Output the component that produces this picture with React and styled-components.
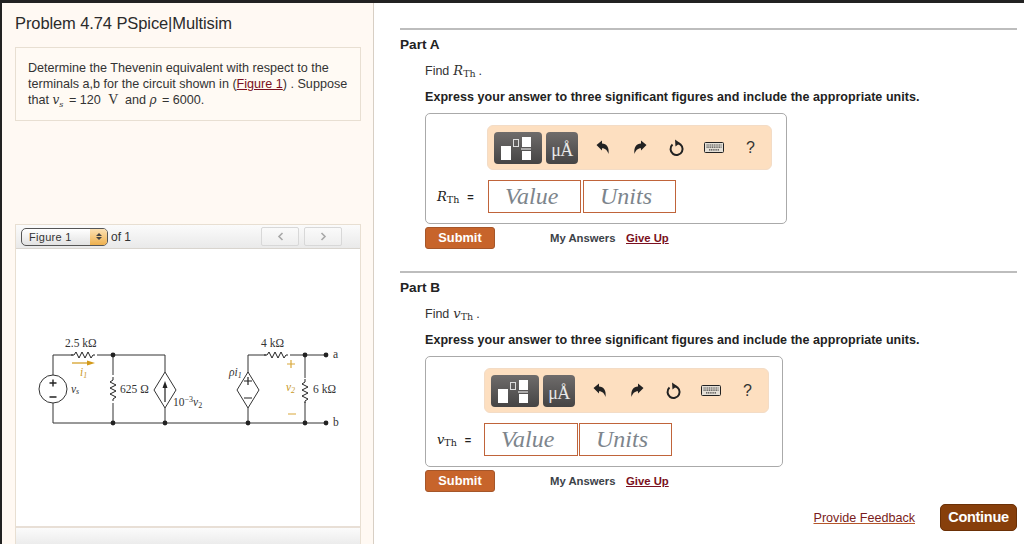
import React from 'react';
import styled, { createGlobalStyle } from 'styled-components';

const Global = createGlobalStyle`
  html, body { margin: 0; padding: 0; background: #fff; }
  body { font-family: "Liberation Sans", Arial, sans-serif; color: #222; overflow: hidden; }
`;
const Page = styled.div`
  width: 1024px; height: 544px; overflow: hidden; display: flex; flex-direction: column;
`;
const TopBar = styled.div`
  height: 3px; flex: none; background: #222;
`;
const Columns = styled.div`
  flex: 1; display: flex; min-height: 0;
`;
const Left = styled.div`
  width: 346px; flex: none; background: #fff9f3; border-left: 2px solid #222;
  border-right: 1px solid #d8cfc4; padding: 0 12px 0 13px; display: flex; flex-direction: column;
`;
const Title = styled.h1`
  margin: 10px 0 0; font-size: 16.5px; line-height: 20px; font-weight: 400; color: #2b2b2b; letter-spacing: -0.1px;
`;
const Statement = styled.div`
  margin-top: 14px; height: 74px; box-sizing: border-box; border: 1px solid #e8dfd2; background: #fffaf4;
  padding: 13px 12px 0; font-size: 12.6px; line-height: 15.5px; color: #333;
`;
const MathI = styled.i`
  font-family: "DejaVu Serif", serif; font-size: 12px; margin-right: 2px;
`;
const TinySub = styled.sub`
  font-size: 8px; line-height: 0;
`;
const MathR = styled.span`
  font-family: "Liberation Serif", serif; font-size: 14px; margin: 0 3px 0 4px;
`;
const RedLink = styled.a`
  color: #7a1020; text-decoration: underline;
`;
const FigurePanel = styled.div`
  margin-top: 103px; border: 1px solid #e8dfd2; border-bottom: 0; background: #fff; flex: 1;
  display: flex; flex-direction: column; min-height: 0;
`;
const FigureBar = styled.div`
  height: 23px; flex: none; display: flex; align-items: center; padding: 0 18px 0 5px;
  background: linear-gradient(#fbfbfb, #e9e9e9); border-bottom: 1px solid #d8d4ce;
  font-size: 12px; color: #333;
`;
const FigSelect = styled.div`
  width: 87px; height: 18px; box-sizing: border-box; border: 1px solid #555; border-radius: 5px;
  background: linear-gradient(#fff, #e2e2e2); display: flex; align-items: center; justify-content: space-between;
  padding-left: 7px; font-size: 11px; letter-spacing: 0.3px; overflow: hidden; margin-right: 3px;
`;
const Stepper = styled.span`
  width: 17px; height: 100%; background: linear-gradient(#fbe1b4, #eeb04d); color: #333;
  display: flex; flex-direction: column; align-items: center; justify-content: center; gap: 1px;
`;
const Tri = styled.span`
  width: 0; height: 0; border-left: 3px solid transparent; border-right: 3px solid transparent;
  ${p => p.$up ? 'border-bottom: 3px solid #444;' : 'border-top: 3px solid #444;'}
`;
const Spacer = styled.div`flex: 1;`;
const PagerBtn = styled.div`
  width: 38px; height: 19px; box-sizing: border-box; margin-left: 5px; border: 1px solid #d8d8d8; border-radius: 2px;
  background: linear-gradient(#fafafa, #eee); display: flex; align-items: center; justify-content: center;
`;
const FigureBody = styled.div`
  flex: 1; display: flex; flex-direction: column; min-height: 0;
`;
const CircuitWrap = styled.div`
  height: 279px; flex: none; border-bottom: 2px solid #e8dfd6; box-sizing: border-box;
`;
const FigureFoot = styled.div`
  flex: 1; background: linear-gradient(#fbfbfb, #ececec);
`;
const Right = styled.div`
  flex: 1; padding: 0 7px 0 26px; min-width: 0; display: flex; flex-direction: column;
`;
const Rule = styled.div`
  height: 2px; background: #bdbdbd; margin-top: ${p => p.$top}px;
`;
const PartTitle = styled.div`
  font-size: 13.6px; font-weight: 700; line-height: 14px; margin-top: 8px; color: #222;
`;
const PartBody = styled.div`
  padding-left: 25px; display: flex; flex-direction: column;
`;
const Find = styled.div`
  margin-top: 11px; font-size: 12.5px; line-height: 16px; color: #333; height: 16px; display: flex; align-items: baseline;
`;
const Express = styled.div`
  margin-top: 11px; font-size: 12.5px; line-height: 14px; font-weight: 700; color: #222; letter-spacing: 0.05px; white-space: nowrap;
`;
const AnswerBox = styled.div`
  margin-top: 9px; width: ${p => p.$w}px; height: 111px; box-sizing: border-box; border: 1px solid #aaa; border-radius: 5px;
  background: #fff; padding-top: 11px; display: flex; flex-direction: column;
`;
const Toolbar = styled.div`
  margin-left: ${p => p.$left}px; width: 285px; height: 45px; box-sizing: border-box; border-radius: 6px; background: #fddfc0;
  display: flex; align-items: center; padding-left: 6px; border: 1px solid #f3dcc6;
`;
const ToolKey = styled.div`
  width: ${p => p.$w}px; height: 32px; border-radius: 4px; background: linear-gradient(#6f6c6b, #454444);
  margin-right: 4px; display: flex; align-items: flex-end; justify-content: center; color: #e8e8e8;
  font-family: "Liberation Serif", serif; font-size: 18px; line-height: 28px; flex: none; letter-spacing: -0.5px;
`;
const ToolIcon = styled.div`
  width: 37px; display: flex; justify-content: center; align-items: center; flex: none; color: #333;
  font-size: 16px; margin-left: ${p => p.$ml || 0}px;
`;
const InputRow = styled.div`
  margin-top: 10px; display: flex; align-items: center;
`;
const Label = styled.div`
  width: ${p => p.$w}px; padding-left: 11px; box-sizing: border-box; flex: none; font-size: 12px; color: #222; white-space: nowrap;
  display: flex; align-items: baseline;
`;
const Sub = styled.span`
  font-size: 9.5px; font-style: normal; font-family: "DejaVu Serif", serif; transform: translateY(2px); display: inline-block;
`;
const MathVar = styled.i`
  font-family: "DejaVu Serif", serif; font-size: 13px;
`;
const FindVar = styled.span`
  margin-left: 4px; display: inline-flex; align-items: baseline; margin-right: 3px;
`;
const Eq = styled.span`
  font-family: "Liberation Sans", sans-serif; font-style: normal; margin-left: 8px; font-size: 11px; font-weight: 700;
`;
const Field = styled.div`
  width: ${p => p.$w}px; height: 33px; box-sizing: border-box; border: 1px solid #c0643a; background: #fff;
  font-family: "Liberation Serif", serif; font-style: italic; font-size: 24px; color: #7d858c;
  padding-left: 16px; line-height: 31px; margin-right: ${p => p.$mr || 0}px;
`;
const Actions = styled.div`
  margin-top: 3px; height: 22px; display: flex; align-items: center; font-size: 11.3px; font-weight: 700;
`;
const SubmitBtn = styled.div`
  width: 70px; height: 22px; box-sizing: border-box; border: 1px solid #a5562a; border-radius: 3px;
  background: #c7642b; color: #fff; font-size: 12.8px; font-weight: 700; text-align: center; line-height: 19px;
  margin-right: 55px;
`;
const MyAnswers = styled.span`
  color: #3c4248; margin-right: 10.5px;
`;
const GiveUp = styled.a`
  color: #7a1020; text-decoration: underline;
`;
const FooterRow = styled.div`
  margin-top: 12px; display: flex; justify-content: flex-end; align-items: center;
`;
const Feedback = styled.a`
  color: #7a1c20; text-decoration: underline; font-size: 12.6px; margin-right: 25px; text-decoration-color: #b5562a;
`;
const ContinueBtn = styled.div`
  width: 77px; height: 27px; box-sizing: border-box; border: 1px solid #6b3006; border-radius: 5px; background: #873f0b;
  color: #fff; font-size: 14.5px; font-weight: 700; text-align: center; line-height: 24px; letter-spacing: -0.3px;
`;

const Resistor = ({ x, y, vertical }) => (
  vertical
    ? <polyline fill="none" stroke="#222" strokeWidth="1" points={`${x},${y} ${x},${y+3} ${x-3},${y+5} ${x+3},${y+8} ${x-3},${y+11} ${x+3},${y+14} ${x-3},${y+17} ${x+3},${y+20} ${x},${y+22} ${x},${y+24}`} />
    : <polyline fill="none" stroke="#222" strokeWidth="1" points={`${x},${y} ${x+3},${y} ${x+5},${y-3} ${x+8},${y+3} ${x+11},${y-3} ${x+14},${y+3} ${x+17},${y-3} ${x+20},${y+3} ${x+22},${y} ${x+24},${y}`} />
);
const Dot = ({ x, y }) => <circle cx={x} cy={y} r="2.4" fill="#222" />;
const ST = styled.text`
  font-family: "Liberation Serif", serif; font-size: 11.5px; fill: #333;
`;
const Circuit = () => (
  <svg width="346" height="277" viewBox="15 249 346 277">
    <g fill="none" stroke="#333" strokeWidth="1">
      <path d="M52 375V355H72M96 355H164M112 355V375M112 403V423M52 403V423H304M164 355V372M164 408V423" />
      <circle cx="52" cy="389" r="14" />
      <path d="M164 372L175 390L164 408L153 390Z" />
      <path d="M247 373V355H265M289 355H325M304 355V378M304 402V423H325M247 408V423" />
      <path d="M247 372L258 390L247 408L236 390Z" />
    </g>
    <Resistor x={70} y={355} />
    <Resistor x={263} y={355} />
    <Resistor x={112} y={377} vertical />
    <Resistor x={304} y={379} vertical />
    <path d="M164 402V384" stroke="#222" strokeWidth="1.2" />
    <path d="M164 381L161.5 388H166.5Z" fill="#222" />
    <path d="M48.5 383H55.5M52 379.5V386.5M48.5 397H55.5" stroke="#222" strokeWidth="1.4" />
    <path d="M243 381H251M247 377V385M243 398H251" stroke="#222" strokeWidth="1.2" />
    <path d="M71 363H90" stroke="#d39a1a" strokeWidth="1.2" />
    <path d="M94 363L86 360.5V365.5Z" fill="#d39a1a" />
    <path d="M286 364H294M290 360V368M287 414H295" stroke="#d9a83a" strokeWidth="1.2" />
    {[[112,355],[112,423],[164,423],[247,423],[304,355],[304,423],[325,355],[325,423]].map(([x,y]) => <Dot key={`${x}-${y}`} x={x} y={y} />)}
    <ST x="64" y="347">2.5 kΩ</ST>
    <ST x="260" y="347">4 kΩ</ST>
    <ST x="119" y="393">625 Ω</ST>
    <ST x="312" y="393">6 kΩ</ST>
    <ST x="332" y="358">a</ST>
    <ST x="332" y="426">b</ST>
    <ST x="70" y="393" fontStyle="italic">v<tspan fontSize="8" dy="1">s</tspan></ST>
    <ST x="79" y="376" fontStyle="italic" style={{ fill: '#c9981f' }}>i<tspan fontSize="8" dy="2">1</tspan></ST>
    <ST x="228" y="376" fontStyle="italic">ρi<tspan fontSize="8" dy="2">1</tspan></ST>
    <ST x="172" y="406">10<tspan fontSize="8" dy="-4">−3</tspan><tspan fontStyle="italic" dy="4">v</tspan><tspan fontSize="8" dy="2">2</tspan></ST>
    <ST x="285" y="391" fontStyle="italic" style={{ fill: '#c9981f' }}>v<tspan fontSize="8" dy="2">2</tspan></ST>
  </svg>
);

const TemplateIcon = () => (
  <svg width="30" height="24" viewBox="0 0 30 24" style={{ marginLeft: -4, marginBottom: 4 }}>
    <rect x="0" y="10" width="10" height="14" fill="#fff" />
    <rect x="12.5" y="3.5" width="5" height="7" fill="none" stroke="#ddd" strokeWidth="1" />
    <rect x="21" y="1" width="9" height="10" fill="#fff" />
    <rect x="20" y="12.5" width="10" height="1" fill="#fff" />
    <rect x="21" y="15" width="9" height="9" fill="#fff" />
  </svg>
);
const Undo = ({ flip }) => (
  <svg width="14" height="15" viewBox="0 0 14 15" style={flip ? { transform: 'scaleX(-1)' } : undefined}>
    <path d="M0.5 5L6 0.5V3.4C10.5 3.4 13.5 7 12.5 14C11.5 10.5 9.5 8.2 6 8.2V10.5Z" fill="#222" />
  </svg>
);
const Reset = () => (
  <svg width="17" height="18" viewBox="0 0 17 18">
    <path d="M10 4.2A6 6 0 1 1 4.5 5.6" fill="none" stroke="#222" strokeWidth="2" />
    <path d="M7 0.5L12 4L7.5 7.5Z" fill="#222" />
  </svg>
);
const Keyboard = () => (
  <svg width="20" height="11" viewBox="0 0 20 11">
    <rect x="0.5" y="0.5" width="19" height="10" rx="1" fill="#e4dfd6" stroke="#222" />
    <path d="M2.5 3H17.5M2.5 5.2H17.5M5 7.8H15" stroke="#444" strokeWidth="1.2" strokeDasharray="1.2 .6" />
  </svg>
);
const Chevron = ({ flip }) => (
  <svg width="7" height="9" viewBox="0 0 7 9" style={flip ? { transform: 'scaleX(-1)' } : undefined}>
    <path d="M5.5 1L2 4.5L5.5 8" fill="none" stroke="#a8a8a8" strokeWidth="1.6" />
  </svg>
);

const Answer = ({ label, boxW, toolLeft, labelW, w1, w2, gap }) => (
  <AnswerBox $w={boxW}>
    <Toolbar $left={toolLeft}>
      <ToolKey $w={48}><TemplateIcon /></ToolKey>
      <ToolKey $w={32}>μÅ</ToolKey>
      <ToolIcon $ml={2}><Undo /></ToolIcon>
      <ToolIcon><Undo flip /></ToolIcon>
      <ToolIcon><Reset /></ToolIcon>
      <ToolIcon><Keyboard /></ToolIcon>
      <ToolIcon>?</ToolIcon>
    </Toolbar>
    <InputRow>
      <Label $w={labelW}>{label}<Eq>=</Eq></Label>
      <Field $w={w1} $mr={gap}>Value</Field>
      <Field $w={w2}>Units</Field>
    </InputRow>
  </AnswerBox>
);

const Part = ({ name, top, varName, answer }) => (
  <>
    <Rule $top={top} />
    <PartTitle>{name}</PartTitle>
    <PartBody>
      <Find>Find<FindVar><MathVar>{varName}</MathVar><Sub>Th</Sub></FindVar>.</Find>
      <Express>Express your answer to three significant figures and include the appropriate units.</Express>
      <Answer {...answer} label={<><MathVar>{varName}</MathVar><Sub>Th</Sub></>} />
      <Actions>
        <SubmitBtn>Submit</SubmitBtn>
        <MyAnswers>My Answers</MyAnswers>
        <GiveUp>Give Up</GiveUp>
      </Actions>
    </PartBody>
  </>
);

export default function App() {
  return (
    <Page>
      <Global />
      <TopBar />
      <Columns>
        <Left>
          <Title>Problem 4.74 PSpice|Multisim</Title>
          <Statement>
            Determine the Thevenin equivalent with respect to the terminals a,b for the circuit shown in (<RedLink>Figure 1</RedLink>) . Suppose that <MathI>v<TinySub>s</TinySub></MathI> = 120 <MathR>V</MathR> and <MathI>ρ</MathI> = 6000.
          </Statement>
          <FigurePanel>
            <FigureBar>
              <FigSelect>Figure 1<Stepper><Tri $up /><Tri /></Stepper></FigSelect>
              of 1
              <Spacer />
              <PagerBtn><Chevron /></PagerBtn>
              <PagerBtn><Chevron flip /></PagerBtn>
            </FigureBar>
            <FigureBody>
              <CircuitWrap><Circuit /></CircuitWrap>
              <FigureFoot />
            </FigureBody>
          </FigurePanel>
        </Left>
        <Right>
          <Part name="Part A" top={25} varName="R" answer={{ boxW: 362, toolLeft: 61, labelW: 62, w1: 93, w2: 93, gap: 2 }} />
          <Part name="Part B" top={22} varName="v" answer={{ boxW: 358, toolLeft: 58, labelW: 58, w1: 94, w2: 93, gap: 1 }} />
          <FooterRow>
            <Feedback>Provide Feedback</Feedback>
            <ContinueBtn>Continue</ContinueBtn>
          </FooterRow>
        </Right>
      </Columns>
    </Page>
  );
}
